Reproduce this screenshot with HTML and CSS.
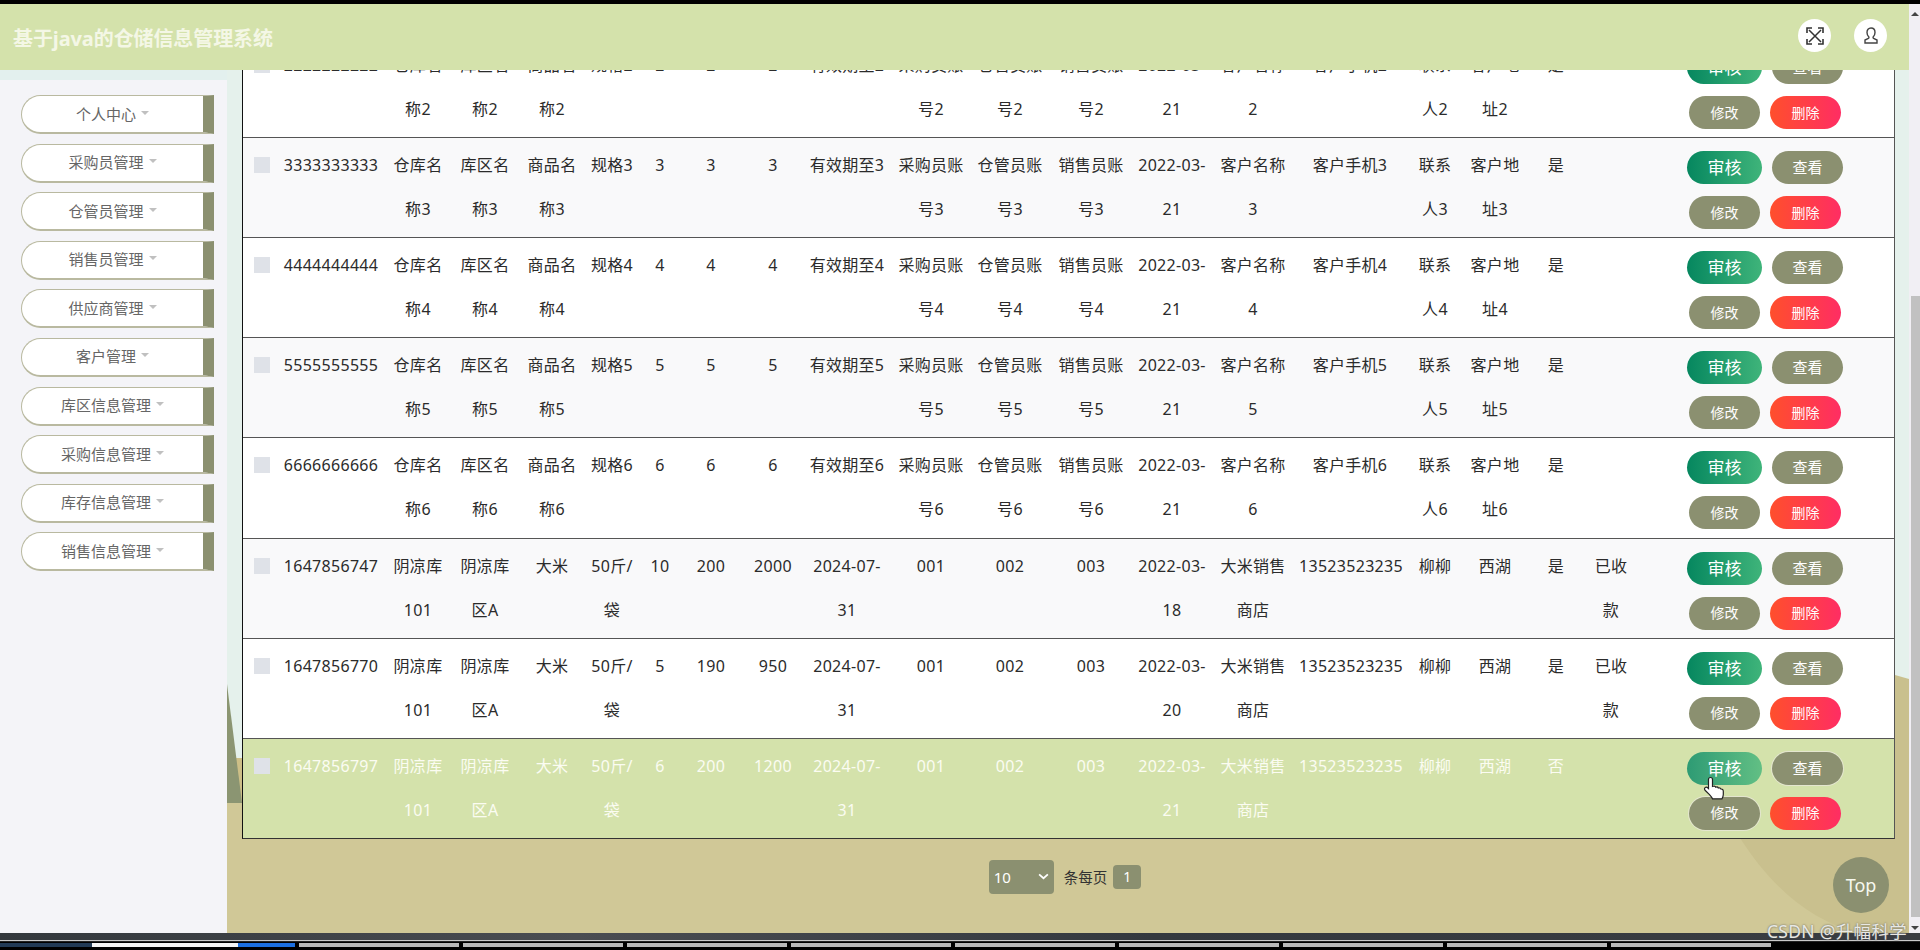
FILE: index.html
```html
<!DOCTYPE html>
<html lang="zh-CN">
<head>
<meta charset="utf-8">
<title>基于java的仓储信息管理系统</title>
<link rel="stylesheet" href="styles.css">
</head>
<body>
<div class="screen-top"></div>
<div class="window">
  <div class="page">
    <header class="topbar">
      <div class="brand">基于java的仓储信息管理系统</div>
      <div class="top-actions">
        <span class="round-icon">
          <svg viewBox="0 0 20 20" width="20" height="20" fill="none" stroke="#333" stroke-width="1.5"><path d="M4 4l12 12M16 4L4 16"/><path d="M2 7V2h5M13 2h5v5M18 13v5h-5M7 18H2v-5" stroke-width="1.6"/></svg>
        </span>
        <span class="round-icon">
          <svg viewBox="0 0 20 20" width="20" height="20" fill="none" stroke="#444" stroke-width="1.4"><path d="M10 2c-2.6 0-4 1.900-4 4.400 0 2 .9 3.400 1.700 4.300.4.500.3 1.300-.3 1.600L4 14v3h12v-3l-3.400-1.700c-.6-.3-.7-1.100-.3-1.600.8-.9 1.700-2.300 1.700-4.300C14 3.900 12.600 2 10 2z"/></svg>
        </span>
      </div>
    </header>
    <div class="content">
      <aside class="sidebar">
        <nav class="menu">
          <a class="menu-item"><span>个人中心</span><i class="caret"></i></a>
          <a class="menu-item"><span>采购员管理</span><i class="caret"></i></a>
          <a class="menu-item"><span>仓管员管理</span><i class="caret"></i></a>
          <a class="menu-item"><span>销售员管理</span><i class="caret"></i></a>
          <a class="menu-item"><span>供应商管理</span><i class="caret"></i></a>
          <a class="menu-item"><span>客户管理</span><i class="caret"></i></a>
          <a class="menu-item"><span>库区信息管理</span><i class="caret"></i></a>
          <a class="menu-item"><span>采购信息管理</span><i class="caret"></i></a>
          <a class="menu-item"><span>库存信息管理</span><i class="caret"></i></a>
          <a class="menu-item"><span>销售信息管理</span><i class="caret"></i></a>
        </nav>
      </aside>
      <main class="main">
        <svg class="scenery" viewBox="227 70 1682 863" preserveAspectRatio="none">
          <rect x="234" y="758" width="20" height="50" fill="#cdbf87"/>
          <path d="M227 684L242 803H227Z" fill="#8b9572"/>
          <rect x="227" y="803" width="1682" height="130" fill="#d0c897"/>
          <path d="M1600 690L1895 675L1909 679V933H1860C1810 922 1770 885 1740 838Z" fill="#c9c08e"/>
        </svg>
        <div class="scroller">
          <table class="grid">
            <colgroup>
              <col class="c1"><col class="c2"><col class="c3"><col class="c4"><col class="c5"><col class="c6"><col class="c7">
              <col class="c8"><col class="c9"><col class="c10"><col class="c11"><col class="c12"><col class="c13"><col class="c14">
              <col class="c15"><col class="c16"><col class="c17"><col class="c18"><col class="c19"><col class="c20"><col class="c21">
            </colgroup>
            <tbody>
              <tr>
                <td><span class="check"></span></td><td>2222222222</td><td>仓库名<br>称2</td><td>库区名<br>称2</td><td>商品名<br>称2</td><td>规格2</td><td>2</td><td>2</td><td>2</td><td>有效期至2</td><td>采购员账<br>号2</td><td>仓管员账<br>号2</td><td>销售员账<br>号2</td><td>2022-03-<br>21</td><td>客户名称<br>2</td><td>客户手机2</td><td>联系<br>人2</td><td>客户地<br>址2</td><td>是</td><td></td>
                <td class="ops"><div class="ops-box"><button class="btn review">审核</button><button class="btn plain">查看</button><button class="btn plain small">修改</button><button class="btn danger small">删除</button></div></td>
              </tr>
              <tr>
                <td><span class="check"></span></td><td>3333333333</td><td>仓库名<br>称3</td><td>库区名<br>称3</td><td>商品名<br>称3</td><td>规格3</td><td>3</td><td>3</td><td>3</td><td>有效期至3</td><td>采购员账<br>号3</td><td>仓管员账<br>号3</td><td>销售员账<br>号3</td><td>2022-03-<br>21</td><td>客户名称<br>3</td><td>客户手机3</td><td>联系<br>人3</td><td>客户地<br>址3</td><td>是</td><td></td>
                <td class="ops"><div class="ops-box"><button class="btn review">审核</button><button class="btn plain">查看</button><button class="btn plain small">修改</button><button class="btn danger small">删除</button></div></td>
              </tr>
              <tr>
                <td><span class="check"></span></td><td>4444444444</td><td>仓库名<br>称4</td><td>库区名<br>称4</td><td>商品名<br>称4</td><td>规格4</td><td>4</td><td>4</td><td>4</td><td>有效期至4</td><td>采购员账<br>号4</td><td>仓管员账<br>号4</td><td>销售员账<br>号4</td><td>2022-03-<br>21</td><td>客户名称<br>4</td><td>客户手机4</td><td>联系<br>人4</td><td>客户地<br>址4</td><td>是</td><td></td>
                <td class="ops"><div class="ops-box"><button class="btn review">审核</button><button class="btn plain">查看</button><button class="btn plain small">修改</button><button class="btn danger small">删除</button></div></td>
              </tr>
              <tr>
                <td><span class="check"></span></td><td>5555555555</td><td>仓库名<br>称5</td><td>库区名<br>称5</td><td>商品名<br>称5</td><td>规格5</td><td>5</td><td>5</td><td>5</td><td>有效期至5</td><td>采购员账<br>号5</td><td>仓管员账<br>号5</td><td>销售员账<br>号5</td><td>2022-03-<br>21</td><td>客户名称<br>5</td><td>客户手机5</td><td>联系<br>人5</td><td>客户地<br>址5</td><td>是</td><td></td>
                <td class="ops"><div class="ops-box"><button class="btn review">审核</button><button class="btn plain">查看</button><button class="btn plain small">修改</button><button class="btn danger small">删除</button></div></td>
              </tr>
              <tr>
                <td><span class="check"></span></td><td>6666666666</td><td>仓库名<br>称6</td><td>库区名<br>称6</td><td>商品名<br>称6</td><td>规格6</td><td>6</td><td>6</td><td>6</td><td>有效期至6</td><td>采购员账<br>号6</td><td>仓管员账<br>号6</td><td>销售员账<br>号6</td><td>2022-03-<br>21</td><td>客户名称<br>6</td><td>客户手机6</td><td>联系<br>人6</td><td>客户地<br>址6</td><td>是</td><td></td>
                <td class="ops"><div class="ops-box"><button class="btn review">审核</button><button class="btn plain">查看</button><button class="btn plain small">修改</button><button class="btn danger small">删除</button></div></td>
              </tr>
              <tr>
                <td><span class="check"></span></td><td>1647856747</td><td>阴凉库<br>101</td><td>阴凉库<br>区A</td><td>大米</td><td>50斤/<br>袋</td><td>10</td><td>200</td><td>2000</td><td>2024-07-<br>31</td><td>001</td><td>002</td><td>003</td><td>2022-03-<br>18</td><td>大米销售<br>商店</td><td>13523523235</td><td>柳柳</td><td>西湖</td><td>是</td><td>已收<br>款</td>
                <td class="ops"><div class="ops-box"><button class="btn review">审核</button><button class="btn plain">查看</button><button class="btn plain small">修改</button><button class="btn danger small">删除</button></div></td>
              </tr>
              <tr>
                <td><span class="check"></span></td><td>1647856770</td><td>阴凉库<br>101</td><td>阴凉库<br>区A</td><td>大米</td><td>50斤/<br>袋</td><td>5</td><td>190</td><td>950</td><td>2024-07-<br>31</td><td>001</td><td>002</td><td>003</td><td>2022-03-<br>20</td><td>大米销售<br>商店</td><td>13523523235</td><td>柳柳</td><td>西湖</td><td>是</td><td>已收<br>款</td>
                <td class="ops"><div class="ops-box"><button class="btn review">审核</button><button class="btn plain">查看</button><button class="btn plain small">修改</button><button class="btn danger small">删除</button></div></td>
              </tr>
              <tr class="hovered">
                <td><span class="check"></span></td><td>1647856797</td><td>阴凉库<br>101</td><td>阴凉库<br>区A</td><td>大米</td><td>50斤/<br>袋</td><td>6</td><td>200</td><td>1200</td><td>2024-07-<br>31</td><td>001</td><td>002</td><td>003</td><td>2022-03-<br>21</td><td>大米销售<br>商店</td><td>13523523235</td><td>柳柳</td><td>西湖</td><td>否</td><td></td>
                <td class="ops"><div class="ops-box"><button class="btn review active">审核</button><button class="btn plain">查看</button><button class="btn plain small">修改</button><button class="btn danger small">删除</button></div></td>
              </tr>
            </tbody>
          </table>
          <div class="pager">
            <div class="page-size"><span>10</span><svg viewBox="0 0 12 8" width="11" height="7" fill="none" stroke="#fff" stroke-width="2"><path d="M1 1.500l5 4.500 5-4.500"/></svg></div>
            <span class="pager-label">条每页</span>
            <span class="page-no">1</span>
          </div>
        </div>
      </main>
    </div>
  </div>
  <div class="scrollbar">
    <span class="arrow up"></span>
    <div class="thumb-area"><div class="thumb"></div></div>
    <span class="arrow down"></span>
  </div>
</div>
<div class="taskbar">
  <div class="task-glow"></div>
  <div class="task-line"></div>
  <div class="task-tabs">
    <i class="tab t-dark"></i><i class="tab t-white"></i><i class="tab t-blue"></i><i class="tab"></i><i class="tab"></i><i class="tab"></i><i class="tab"></i><i class="tab"></i><i class="tab"></i><i class="tab"></i><i class="tab"></i><i class="tab"></i>
  </div>
</div>
<a class="to-top">Top</a>
<svg class="pointer" viewBox="0 0 24 26" width="24" height="26"><path d="M7.500 1.500c1.300 0 2 .9 2 2v7l1-.3c1-.3 2 .2 2.300 1 .9-.4 2.100-.1 2.500.8 1-.4 2.300 0 2.700 1 1.200-.1 2.300.8 2.300 2.200v3.300c0 1.500-.5 2.800-1.300 4.300H9.500c-.6-1.500-1.700-2.800-3-4.200L2.300 14.500c-1-1-1-2.200-.2-2.900.9-.7 2-.4 2.900.4l.5.500V3.500c0-1.100.7-2 2-2z" fill="#fff" stroke="#222" stroke-width="1.200"/></svg>
<div class="watermark">CSDN @升幅科学</div>
</body>
</html>
```

FILE: styles.css
```css
* { box-sizing: border-box; }
html, body { margin: 0; height: 950px; overflow: hidden; }
body {
  display: flex;
  flex-direction: column;
  position: relative;
  background: #000;
  font-family: "Noto Sans", "Noto Sans CJK SC", sans-serif;
  font-size: 16px;
  color: #333;
}
.screen-top { height: 4px; flex: none; background: #000; }
.window { height: 929px; flex: none; display: flex; }
.page { flex: 1; min-width: 0; display: flex; flex-direction: column; }

.topbar {
  height: 66px;
  flex: none;
  display: flex;
  align-items: center;
  justify-content: space-between;
  padding: 0 22px 0 13px;
  background: #d4e2ab;
}
.brand { font-size: 20px; font-weight: 700; color: #f4f7e6; letter-spacing: -.1px; }
.top-actions { display: flex; gap: 23px; margin-top: -3px; }
.round-icon {
  width: 33px;
  height: 33px;
  border-radius: 50%;
  background: #fff;
  display: flex;
  align-items: center;
  justify-content: center;
}

.content { flex: 1; min-height: 0; display: flex; }
.sidebar {
  width: 227px;
  flex: none;
  background: #f4f4f8;
  border-top: 10px solid #e3f0ee;
  padding: 15px 13px 0 21px;
}
.menu { display: grid; grid-auto-rows: 39px; row-gap: 9.6px; }
.menu-item {
  display: flex;
  align-items: center;
  justify-content: center;
  gap: 5px;
  background: #fff;
  border: 1px solid #b9b9a0;
  border-bottom-width: 2px;
  border-right: 11px solid #8b9070;
  border-radius: 20px 0 0 20px;
  color: #666;
  font-size: 15px;
  line-height: 1;
}
.caret {
  width: 0;
  height: 0;
  margin-top: -3px;
  border-left: 4px solid transparent;
  border-right: 4px solid transparent;
  border-top: 4px solid #c0c0c0;
}

.main { flex: 1; min-width: 0; position: relative; overflow: hidden; background: #e5f1ec; }
.scenery { position: absolute; inset: 0; width: 100%; height: 100%; }
.scroller { position: relative; padding-left: 15px; margin-top: -33px; }

.grid {
  table-layout: fixed;
  width: 1653px;
  border-collapse: separate;
  border-spacing: 0;
  border-top: 1px solid #555;
  border-left: 1px solid #111;
  border-right: 1px solid #555;
  border-bottom: 1px solid #333;
  background: #fff;
  letter-spacing: .3px;
  color: #2b2b2b;
}
.c1 { width: 36px; } .c2 { width: 104px; } .c3 { width: 70px; } .c4 { width: 64px; }
.c5 { width: 70px; } .c6 { width: 50px; } .c7 { width: 46px; } .c8 { width: 56px; }
.c9 { width: 68px; } .c10 { width: 80px; } .c11 { width: 88px; } .c12 { width: 70px; }
.c13 { width: 92px; } .c14 { width: 70px; } .c15 { width: 92px; } .c16 { width: 102px; }
.c17 { width: 68px; } .c18 { width: 52px; } .c19 { width: 70px; } .c20 { width: 40px; }
.c21 { width: 263px; }

.grid td {
  height: 100.12px;
  padding: 5px 0 0;
  vertical-align: top;
  text-align: center;
  white-space: nowrap;
  line-height: 44px;
  border-bottom: 1px solid #555;
}
.grid tr:last-child td { border-bottom: 0; height: 99.12px; }
.grid tr:nth-child(even) td { background: #f9f9fa; }
.grid tr:nth-child(odd) td { background: #fff; }
.grid tr.hovered td { background: #d4e2ab; color: #fbfcf2; }

.check {
  display: block;
  width: 16px;
  height: 16px;
  margin: 14px 0 0 11px;
  background: #dfe2e8;
}
.grid td.ops { padding: 13px 0 0 56px; line-height: 1; letter-spacing: 0; }
.ops-box {
  width: 156px;
  display: flex;
  flex-wrap: wrap;
  justify-content: center;
  gap: 12px 10px;
}
.btn {
  width: 71px;
  height: 33px;
  padding: 0;
  border: 0;
  border-radius: 17px;
  color: #fff;
  font-family: inherit;
  font-size: 15px;
  line-height: 1;
  background: #8b9070;
}
.btn.small { font-size: 14px; }
.btn.review { width: 75px; font-size: 17px; background: linear-gradient(90deg, #06875f, #3fb47a); }
.btn.review.active { background: linear-gradient(90deg, #2e9b74, #62bf84); }
.btn.danger { background: linear-gradient(90deg, #ff4f2c, #ff2d63); }
.hovered .btn.plain { box-shadow: 0 0 0 1px #e4e6cf; }

.pager {
  display: flex;
  align-items: center;
  justify-content: center;
  padding: 21px 21px 0 0;
}
.page-size {
  width: 65px;
  height: 34px;
  display: flex;
  align-items: center;
  justify-content: space-between;
  padding: 0 5px 0 5px;
  border-radius: 4px;
  background: #8b9070;
  color: #fff;
  font-size: 15px;
}
.pager-label { margin-left: 10px; font-size: 14.500px; color: #333; }
.page-no {
  width: 28px;
  height: 24px;
  margin-left: 6px;
  border-radius: 4px;
  background: #8b9070;
  color: #fff;
  font-size: 14px;
  line-height: 23px;
  text-align: center;
}

.scrollbar {
  width: 11px;
  flex: none;
  display: flex;
  flex-direction: column;
  align-items: flex-end;
  background: #f1eff4;
}
.thumb-area { flex: 1; width: 9px; padding-top: 272px; padding-bottom: 1px; }
.thumb { height: 621px; background: #c1c1c1; }
.arrow { width: 100%; height: 20px; flex: none; display: flex; justify-content: center; align-items: center; }
.arrow::before { content: ""; border-left: 4px solid transparent; border-right: 4px solid transparent; }
.arrow.up::before { border-bottom: 4px solid #444; }
.arrow.down::before { border-top: 4px solid #444; }

.taskbar { height: 17px; flex: none; background: #000; }
.task-glow { height: 7px; background: linear-gradient(90deg, #33383d, #4a4d52 30%, #34393f 60%, #3a3d42); }
.task-line { height: 2px; background: linear-gradient(180deg, #c9c9c9 50%, #222 50%); }
.task-tabs { height: 4px; margin-top: 1px; display: flex; gap: 4px; }
.tab { width: 160px; flex: none; background: #b9b9b9; }
.tab.t-dark { width: 92px; margin-right: -4px; background: #223a55; }
.tab.t-white { width: 146px; margin-right: -4px; background: #f4f4f4; }
.tab.t-blue { width: 57px; background: #1c6fe0; }

.to-top {
  position: absolute;
  left: 1833px;
  top: 857px;
  width: 56px;
  height: 56px;
  border-radius: 50%;
  background: #8b9070;
  color: #f6f8ee;
  font-size: 18px;
  line-height: 56px;
  text-align: center;
}
.pointer { position: absolute; left: 1703px; top: 776px; }
.watermark {
  position: absolute;
  left: 1767px;
  top: 918px;
  color: #e8e8e4;
  font-size: 17.500px;
  letter-spacing: .3px;
  text-shadow: 0 0 2px #555;
  white-space: nowrap;
}
```
